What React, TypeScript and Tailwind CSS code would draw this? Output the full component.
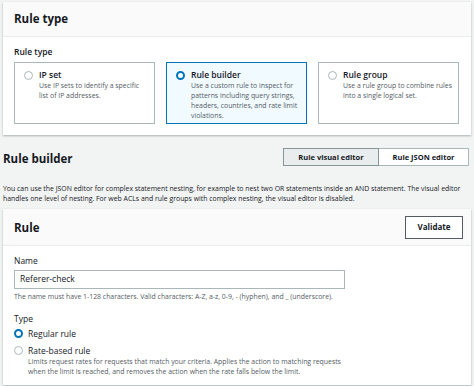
import React from "react";

const ruleTypes = [
  {
    title: "IP set",
    desc: "Use IP sets to identify a specific list of IP addresses.",
    selected: false,
    width: "max-w-[110px]",
  },
  {
    title: "Rule builder",
    desc: "Use a custom rule to inspect for patterns including query strings, headers, countries, and rate limit violations.",
    selected: true,
    width: "",
  },
  {
    title: "Rule group",
    desc: "Use a rule group to combine rules into a single logical set.",
    selected: false,
    width: "",
  },
];

const Radio = ({ checked }: { checked: boolean }) =>
  checked ? (
    <span className="mt-[2px] h-[9px] w-[9px] shrink-0 rounded-full border-[2.5px] border-[#0073bb] bg-white" />
  ) : (
    <span className="mt-[2px] h-[9px] w-[9px] shrink-0 rounded-full border border-[#aab7b8] bg-white" />
  );

const App: React.FC = () => {
  return (
    <div
      className="h-[386px] w-[474px] overflow-hidden bg-[#f2f3f3] pl-[3px] pr-[3px] pt-[2px] text-[#16191f]"
      style={{ fontFamily: '"Open Sans", "Noto Sans", sans-serif' }}
    >
      {/* Rule type card */}
      <section className="h-[133px] bg-white shadow-[0_1px_2px_rgba(0,28,36,0.3)]">
        <div className="flex h-[35px] items-center border-b border-[#eaeded] bg-[#fafafa] px-[11px]">
          <h2 className="text-[11.5px] font-bold">Rule type</h2>
        </div>
        <div className="px-[11px] pt-[8px]">
          <div className="text-[8.5px] font-semibold leading-[14px]">Rule type</div>
          <div className="mt-[3px] flex gap-[11px]">
            {ruleTypes.map((t) => (
              <div
                key={t.title}
                className={
                  t.selected
                    ? "flex h-[62px] w-[141px] gap-[6px] border border-[#0073bb] bg-[#f1faff] pl-[9px] pr-[3px] pt-[6px]"
                    : "flex h-[62px] w-[141px] gap-[6px] border border-[#aab7b8] bg-white pl-[9px] pr-[3px] pt-[6px]"
                }
              >
                <Radio checked={t.selected} />
                <div className={t.width}>
                  <div className="text-[8.5px] font-semibold leading-[12px]">{t.title}</div>
                  <div className="text-[6.9px] leading-[10px] text-[#545b64]">{t.desc}</div>
                </div>
              </div>
            ))}
          </div>
        </div>
      </section>

      {/* Rule builder */}
      <div className="mt-[12px] flex items-center justify-between">
        <h2 className="pt-[3px] text-[11.5px] font-bold">Rule builder</h2>
        <div className="mr-[2px] flex">
          <div className="flex h-[18px] w-[96px] items-center justify-center border border-[#879596] bg-[#eaeded] text-[7.5px] font-bold">
            Rule visual editor
          </div>
          <div className="flex h-[18px] w-[90px] items-center justify-center border border-l-0 border-[#aab7b8] bg-white text-[7.5px] font-bold">
            Rule JSON editor
          </div>
        </div>
      </div>
      <p className="mt-[17px] text-[6.9px] leading-[10px]">
        You can use the JSON editor for complex statement nesting, for example to nest two OR statements inside an AND statement. The visual editor handles one level of nesting. For web ACLs and rule groups with complex nesting, the visual editor is disabled.
      </p>

      {/* Rule card */}
      <section className="mt-[5px] h-[176px] bg-white shadow-[0_1px_2px_rgba(0,28,36,0.3)]">
        <div className="flex h-[37px] items-center justify-between border-b border-[#eaeded] bg-[#fafafa] pl-[11px] pr-[8px]">
          <h2 className="text-[11.5px] font-bold">Rule</h2>
          <button className="flex h-[23px] w-[58px] items-center justify-center border border-[#545b64] bg-white text-[8px] font-bold">
            Validate
          </button>
        </div>
        <div className="px-[11px] pt-[8px]">
          <div className="text-[8.5px] leading-[13px]">Name</div>
          <div className="mt-[3px] flex h-[19px] w-[331px] items-center border border-[#aab7b8] px-[5px] text-[8.5px]">
            Referer-check
          </div>
          <div className="mt-[3px] text-[6.9px] leading-[10px] text-[#545b64]">
            The name must have 1-128 characters. Valid characters: A-Z, a-z, 0-9, - (hyphen), and _ (underscore).
          </div>
          <div className="mt-[10px] text-[8.5px] leading-[13px]">Type</div>
          <div className="mt-[2px] flex items-start gap-[5px]">
            <Radio checked />
            <div className="text-[8.5px] leading-[13px]">Regular rule</div>
          </div>
          <div className="mt-[4px] flex items-start gap-[5px]">
            <Radio checked={false} />
            <div className="max-w-[322px]">
              <div className="text-[8.5px] leading-[13px]">Rate-based rule</div>
              <div className="text-[6.9px] leading-[10px] text-[#545b64]">
                Limits request rates for requests that match your criteria. Applies the action to matching requests when the limit is reached, and removes the action when the rate falls below the limit.
              </div>
            </div>
          </div>
        </div>
      </section>
    </div>
  );
};

export default App;
